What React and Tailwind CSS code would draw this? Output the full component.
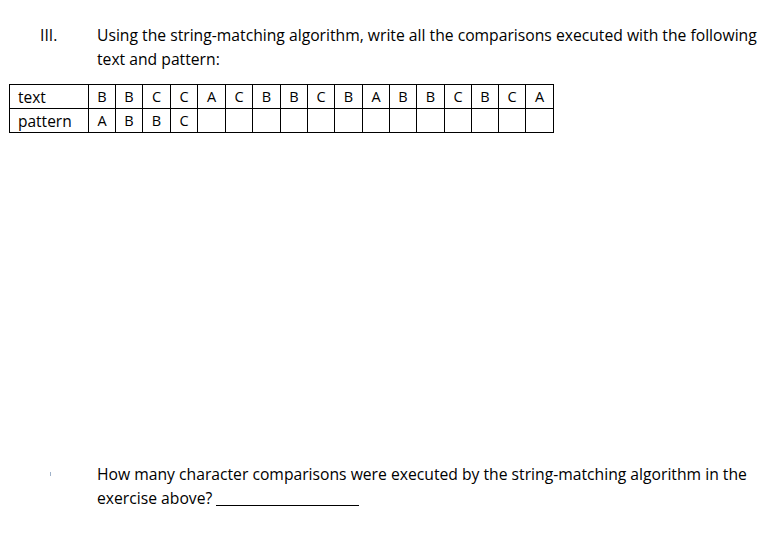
const textRow = ["B","B","C","C","A","C","B","B","C","B","A","B","B","C","B","C","A"];
const patRow = ["A","B","B","C","","","","","","","","","","","","",""];

function Cell({ children }) {
  return (
    <div className="border-l border-t border-black flex justify-center items-start pt-[1px] text-[14.5px] leading-[22px]">
      {children}
    </div>
  );
}

function LabelCell({ children }) {
  return (
    <div className="border-l border-t border-black pl-[8px] pt-[1px] text-[15.5px] leading-[22px]">
      {children}
    </div>
  );
}

export default function App() {
  return (
    <div
      className="w-[783px] h-[533px] bg-white text-black overflow-hidden"
      style={{ fontFamily: "'Open Sans', sans-serif" }}
    >
      <div className="flex pt-[23px] text-[15.7px] leading-[24px]">
        <div className="w-[97px] pl-[40px] shrink-0">III.</div>
        <div className="whitespace-nowrap">
          Using the string-matching algorithm, write all the comparisons executed with the following
          <br />
          text and pattern:
        </div>
      </div>

      <div className="ml-[9px] mt-[13px] w-fit grid grid-cols-[79px_27px_27px_28px_27px_28px_27px_28px_27px_27px_28px_27px_27px_28px_27px_27px_27px_28px] grid-rows-[24px_24px] border-r border-b border-black">
        <LabelCell>text</LabelCell>
        {textRow.map((c, i) => (
          <Cell key={"t" + i}>{c}</Cell>
        ))}
        <LabelCell>pattern</LabelCell>
        {patRow.map((c, i) => (
          <Cell key={"p" + i}>{c}</Cell>
        ))}
      </div>

      <div className="flex mt-[329px] text-[15.7px] leading-[24px]">
        <div className="w-[97px] shrink-0 pl-[50px] pt-[10px]">
          <div className="w-px h-[4px] bg-[#9fb2c9]" />
        </div>
        <div className="whitespace-nowrap">
          How many character comparisons were executed by the string-matching algorithm in the
          <br />
          exercise above?{" "}
          <span className="inline-block align-baseline w-[143px] border-b border-black translate-y-[2px]" />
        </div>
      </div>
    </div>
  );
}
